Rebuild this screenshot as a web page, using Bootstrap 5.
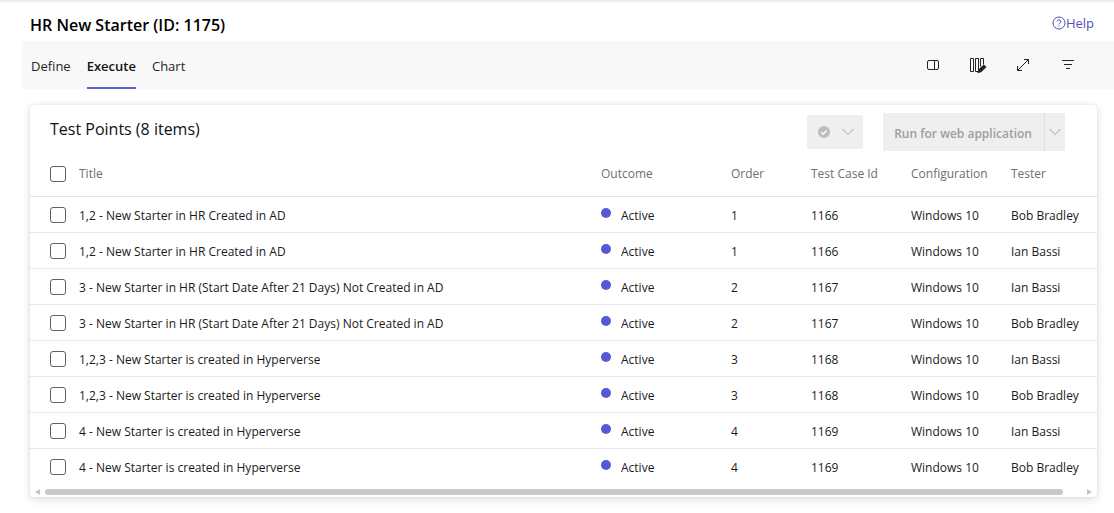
<!DOCTYPE html>
<html lang="en">
<head>
<meta charset="utf-8">
<meta name="viewport" content="width=device-width, initial-scale=1">
<title>HR New Starter (ID: 1175)</title>
<link href="https://cdn.jsdelivr.net/npm/bootstrap@5.3.0/dist/css/bootstrap.min.css" rel="stylesheet">
<style>
  body { font-family: "Open Sans", "Noto Sans", sans-serif; font-size: 12px; color: #1a1a1a; background: #fff; }
  .page-head { border-top: 2px solid #eee; padding: 11px 20px 0 30px; height: 41px; }
  .page-head h1 { font-size: 16px; line-height: 24px; font-weight: 600; color: #000; }
  .help-link { font-size: 13px; line-height: 20px; color: #4f52b2; }
  .tab-bar { background: #f8f8f8; margin-left: 22px; height: 48px; padding: 0 36px 0 9px; }
  .tab-bar .nav-link { font-size: 13px; line-height: 20px; padding: 15px 0 11px; color: #242424; border-bottom: 2px solid transparent; }
  .tab-bar .nav-link.active { font-weight: 600; color: #111; border-color: #5b5fc7; }
  .tool-set { gap: 25px; }
  .tool-btn { width: 20px; height: 20px; color: #242424; }
  .points { margin: 16px 17px 16px 30px; border-radius: 4px; box-shadow: 0 2px 8px rgba(0,0,0,.14), 0 0 2px rgba(0,0,0,.1); }
  .points-head { padding: 8px 32px 0 20px; }
  .points-head h2 { font-size: 16px; line-height: 32px; color: #111; }
  .btn-set { gap: 20px; }
  .grey-btn, .grey-btn:disabled { background: #efefef; color: #9e9e9e; border: 0; border-radius: 2px; opacity: 1; height: 38px; font-size: 12px; font-weight: 600; line-height: 20px; padding: 3px 12px 0 11px; }
  .grey-btn.pick { width: 56px; height: 34px; padding: 0 9px 0 11px; }
  .grey-btn.more { width: 21px; padding: 0; border-left: 1px solid #e0e0e0; }
  .points-table { table-layout: fixed; --bs-table-bg: transparent; color: #1a1a1a; }
  .points-table th { height: 45px; padding: 2px 0 0; font-size: 12px; font-weight: 400; vertical-align: middle; color: #6e6e6e; border-color: #e4e4e4; }
  .points-table td { height: 36px; padding: 4px 0 0; line-height: 18px; border-color: #e8e8e8; white-space: nowrap; }
  .points-table tbody tr:last-child td { border-color: transparent; }
  .points-table .tick { padding: 2px 0 0 20px; }
  .tick .form-check-input { width: 16px; height: 16px; margin: 0; border: 1px solid #616161; border-radius: 3px; display: block; }
  .col-tick { width: 49px; } .col-outcome { width: 130px; } .col-order { width: 80px; }
  .col-mid { width: 100px; } .col-tester { width: 86px; }
  .dot { width: 10px; height: 10px; border-radius: 50%; background: #5558d9; margin: 0 10px 7px 0; }
  .scroll-row { height: 12px; padding: 2px 5px 0; }
  .scroll-thumb { height: 6px; border-radius: 3px; background: #c9c9c9; margin: 0 24px 0 5px; }
</style>
</head>
<body>
<header class="page-head d-flex justify-content-between align-items-start">
  <h1 class="m-0">HR New Starter (ID: 1175)</h1>
  <a href="#" class="help-link d-flex align-items-center text-decoration-none">
    <svg width="14" height="14" viewBox="0 0 14 14" fill="none" stroke="currentColor" aria-hidden="true"><circle cx="7" cy="7" r="6"/><path d="M5.2 5.6a1.8 1.8 0 1 1 2.6 1.6c-.6.3-.8.6-.8 1.1M7 9.3v1.2"/></svg>Help</a>
</header>
<nav class="tab-bar d-flex justify-content-between align-items-center">
  <div class="nav gap-3">
    <a class="nav-link" href="#">Define</a>
    <a class="nav-link active" aria-current="page" href="#">Execute</a>
    <a class="nav-link" href="#">Chart</a>
  </div>
  <div class="tool-set d-flex">
    <button type="button" class="tool-btn btn p-0 border-0 d-flex align-items-center justify-content-center" aria-label="Toggle pane"><svg width="14" height="12" viewBox="0 0 14 12" fill="none" stroke="currentColor"><rect x="1.5" y="1.5" width="11" height="9" rx="1.5"/><path d="M8.5 1.5v9"/></svg></button>
    <button type="button" class="tool-btn btn p-0 border-0 d-flex align-items-center justify-content-center" aria-label="Column options"><svg width="18" height="18" viewBox="0 0 18 18" fill="none" stroke="currentColor"><path d="M1.500 2.500h3v13h-3zM6.500 15.500v-13h3v13zM11.500 10.500v-8h3v6"/><path d="M8.300 17.300l1-3.800 5.500-5 2.700 2.500-5.300 5.200z" fill="currentColor" stroke="none"/></svg></button>
    <button type="button" class="tool-btn btn p-0 border-0 d-flex align-items-center justify-content-center" aria-label="Full screen"><svg width="14" height="14" viewBox="0 0 14 14" fill="none" stroke="currentColor"><path d="M1.500 12.500l11-11M8 1.500h4.500V6M1.500 8v4.500H6"/></svg></button>
    <button type="button" class="tool-btn btn p-0 border-0 d-flex align-items-center justify-content-center" aria-label="Filter"><svg width="14" height="12" viewBox="0 0 14 12" fill="none" stroke="currentColor"><path d="M1 1.500h12M3 5.500h8M5 9.500h4"/></svg></button>
  </div>
</nav>
<main class="points bg-white">
  <div class="points-head d-flex justify-content-between">
    <h2 class="m-0 fw-normal">Test Points (8 items)</h2>
    <div class="btn-set d-flex align-items-center">
      <button type="button" class="btn grey-btn pick d-flex align-items-center justify-content-between" disabled aria-label="Mark outcome">
        <svg width="12" height="12" viewBox="0 0 12 12"><circle cx="6" cy="6" r="6" fill="#bdbdbd"/><path d="M3.300 6.200l1.900 1.900 3.600-3.700" fill="none" stroke="#fff" stroke-width="1.400"/></svg>
        <svg width="12" height="8" viewBox="0 0 12 8" fill="none" stroke="#a6a6a6"><path d="M.5 1l5.500 5.500L11.500 1"/></svg>
      </button>
      <div class="d-flex">
        <button type="button" class="btn grey-btn rounded-end-0" disabled>Run for web application</button>
        <button type="button" class="btn grey-btn more rounded-start-0 d-flex align-items-center justify-content-center" disabled aria-label="More run options"><svg width="12" height="8" viewBox="0 0 12 8" fill="none" stroke="#a0a0a0"><path d="M.5 1l5.500 5.500L11.500 1"/></svg></button>
      </div>
    </div>
  </div>
  <table class="points-table table align-middle m-0">
    <colgroup><col class="col-tick"><col><col class="col-outcome"><col class="col-order"><col class="col-mid"><col class="col-mid"><col class="col-tester"></colgroup>
    <thead><tr><th class="tick"><input class="form-check-input" type="checkbox" aria-label="Select all"></th><th>Title</th><th>Outcome</th><th>Order</th><th>Test Case Id</th><th>Configuration</th><th>Tester</th></tr></thead>
    <tbody>
      <tr><td class="tick"><input class="form-check-input" type="checkbox" aria-label="Select row 1"></td><td>1,2 - New Starter in HR Created in AD</td><td><span class="dot d-inline-block align-middle"></span>Active</td><td>1</td><td>1166</td><td>Windows 10</td><td>Bob Bradley</td></tr>
      <tr><td class="tick"><input class="form-check-input" type="checkbox" aria-label="Select row 2"></td><td>1,2 - New Starter in HR Created in AD</td><td><span class="dot d-inline-block align-middle"></span>Active</td><td>1</td><td>1166</td><td>Windows 10</td><td>Ian Bassi</td></tr>
      <tr><td class="tick"><input class="form-check-input" type="checkbox" aria-label="Select row 3"></td><td>3 - New Starter in HR (Start Date After 21 Days) Not Created in AD</td><td><span class="dot d-inline-block align-middle"></span>Active</td><td>2</td><td>1167</td><td>Windows 10</td><td>Ian Bassi</td></tr>
      <tr><td class="tick"><input class="form-check-input" type="checkbox" aria-label="Select row 4"></td><td>3 - New Starter in HR (Start Date After 21 Days) Not Created in AD</td><td><span class="dot d-inline-block align-middle"></span>Active</td><td>2</td><td>1167</td><td>Windows 10</td><td>Bob Bradley</td></tr>
      <tr><td class="tick"><input class="form-check-input" type="checkbox" aria-label="Select row 5"></td><td>1,2,3 - New Starter is created in Hyperverse</td><td><span class="dot d-inline-block align-middle"></span>Active</td><td>3</td><td>1168</td><td>Windows 10</td><td>Ian Bassi</td></tr>
      <tr><td class="tick"><input class="form-check-input" type="checkbox" aria-label="Select row 6"></td><td>1,2,3 - New Starter is created in Hyperverse</td><td><span class="dot d-inline-block align-middle"></span>Active</td><td>3</td><td>1168</td><td>Windows 10</td><td>Bob Bradley</td></tr>
      <tr><td class="tick"><input class="form-check-input" type="checkbox" aria-label="Select row 7"></td><td>4 - New Starter is created in Hyperverse</td><td><span class="dot d-inline-block align-middle"></span>Active</td><td>4</td><td>1169</td><td>Windows 10</td><td>Ian Bassi</td></tr>
      <tr><td class="tick"><input class="form-check-input" type="checkbox" aria-label="Select row 8"></td><td>4 - New Starter is created in Hyperverse</td><td><span class="dot d-inline-block align-middle"></span>Active</td><td>4</td><td>1169</td><td>Windows 10</td><td>Bob Bradley</td></tr>
    </tbody>
  </table>
  <div class="scroll-row d-flex align-items-center" aria-hidden="true">
    <svg width="5" height="6" viewBox="0 0 5 6"><path d="M5 0v6L0 3z" fill="#c4c4c4"/></svg>
    <div class="scroll-thumb flex-grow-1"></div>
    <svg width="5" height="6" viewBox="0 0 5 6"><path d="M0 0v6l5-3z" fill="#c4c4c4"/></svg>
  </div>
</main>
<script src="https://cdn.jsdelivr.net/npm/bootstrap@5.3.0/dist/js/bootstrap.bundle.min.js"></script>
</body>
</html>
